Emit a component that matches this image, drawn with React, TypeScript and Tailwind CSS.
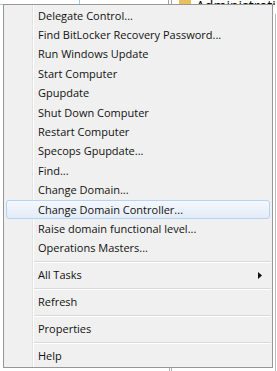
import React from "react";

type Entry = { label: string; highlight?: boolean; submenu?: boolean } | "sep";

const entries: Entry[] = [
  { label: "Delegate Control..." },
  { label: "Find BitLocker Recovery Password..." },
  { label: "Run Windows Update" },
  { label: "Start Computer" },
  { label: "Gpupdate" },
  { label: "Shut Down Computer" },
  { label: "Restart Computer" },
  { label: "Specops Gpupdate..." },
  { label: "Find..." },
  { label: "Change Domain..." },
  { label: "Change Domain Controller...", highlight: true },
  { label: "Raise domain functional level..." },
  { label: "Operations Masters..." },
  "sep",
  { label: "All Tasks", submenu: true },
  "sep",
  { label: "Refresh" },
  "sep",
  { label: "Properties" },
  "sep",
  { label: "Help" },
];

const MenuItem = ({ label, highlight, submenu }: { label: string; highlight?: boolean; submenu?: boolean }) => {
  return (
    <div className="relative flex h-[19.4px] items-center">
      {highlight && (
        <div className="absolute inset-y-0 left-[1px] right-[1px] rounded-[3px] border border-[#b4d3f7] bg-gradient-to-b from-[#f5f8fd] to-[#e3ecf9]"></div>
      )}
      <span className="relative top-[-0.5px] pl-[33px] text-[11px] leading-none text-[#111]">{label}</span>
      {submenu && (
        <svg className="absolute right-[9px] top-[6px]" width="4" height="7" viewBox="0 0 4 7">
          <path d="M0 0 L4 3.5 L0 7 Z" fill="#111" />
        </svg>
      )}
    </div>
  );
};

const Separator = () => (
  <div className="flex h-[7.5px] flex-col justify-center pl-[28px]">
    <div className="h-px bg-[#dadada]"></div>
    <div className="h-px bg-white"></div>
  </div>
);

const App = () => {
  return (
    <div
      className="relative h-[371px] w-[277px] overflow-hidden bg-white"
      style={{ fontFamily: '"Open Sans", "Noto Sans", sans-serif' }}
    >
      {/* window behind the menu */}
      <div className="flex h-[5px] items-end overflow-hidden">
        <div className="h-[10px] w-[80px] shrink-0 rounded-br-[2px] border-r border-b border-[#9ccbf0] bg-white"></div>
        <div className="ml-[88px] flex h-[10px] shrink-0 gap-[2px]">
          <div className="w-px bg-[#a0a0a0]"></div>
          <div className="w-px bg-[#a0a0a0]"></div>
        </div>
        <div className="ml-[7px] h-[10px] w-[12px] shrink-0 bg-[#e8c060]"></div>
        <div className="ml-[5px] flex h-[10px] items-end text-[14px] leading-none text-[#000]">
          <span className="relative top-[8px]">Administration</span>
        </div>
      </div>
      <div className="absolute right-[1px] top-[14px] bottom-0 w-px bg-[#b8b8b8]"></div>
      <div className="absolute bottom-0 left-[169px] flex h-[3px] gap-[1px]">
        <div className="w-px bg-[#b0b0b0]"></div>
        <div className="w-px bg-[#b0b0b0]"></div>
      </div>

      {/* context menu */}
      <div className="absolute left-[3px] top-[4px] w-[270px] border border-[#979797] bg-[#f0f0f0] py-[1px] pl-[1px] pr-[1px]">
        <div className="pointer-events-none absolute top-0 bottom-0 left-[28px] w-px bg-[#e2e3e3]"></div>
        <div className="pointer-events-none absolute top-0 bottom-0 left-[29px] w-px bg-white"></div>
        {entries.map((e, i) =>
          e === "sep" ? (
            <Separator key={i} />
          ) : (
            <MenuItem key={i} label={e.label} highlight={e.highlight} submenu={e.submenu} />
          )
        )}
      </div>
    </div>
  );
};

export default App;
